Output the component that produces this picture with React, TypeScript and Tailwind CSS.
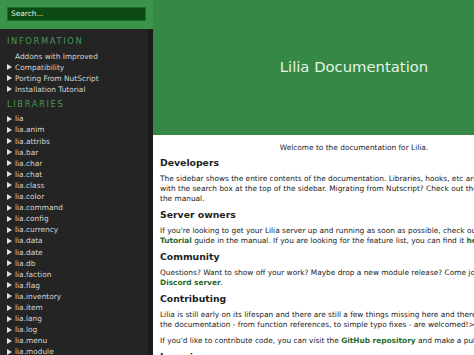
const infoItems = [
  { label: "Addons with Improved", arrow: false },
  { label: "Compatibility", arrow: true },
  { label: "Porting From NutScript", arrow: true },
  { label: "Installation Tutorial", arrow: true },
];

const libraries = [
  "lia", "lia.anim", "lia.attribs", "lia.bar", "lia.char", "lia.chat", "lia.class",
  "lia.color", "lia.command", "lia.config", "lia.currency", "lia.data", "lia.date",
  "lia.db", "lia.faction", "lia.flag", "lia.inventory", "lia.item", "lia.lang",
  "lia.log", "lia.menu", "lia.module", "lia.notice",
];

function Arrow() {
  return (
    <svg width="5" height="6" viewBox="0 0 5 6" className="shrink-0">
      <polygon points="0,0 5,3 0,6" fill="#e0e0e0" />
    </svg>
  );
}

function NavItem({ label, arrow }: { label: string; arrow: boolean }) {
  return (
    <li className="flex items-center h-[11.1px] pl-[7px]">
      <span className="w-[8px] flex items-center">{arrow && <Arrow />}</span>
      <span className="text-[#d6d6d6] whitespace-nowrap">{label}</span>
    </li>
  );
}

function Heading({ children }: { children: React.ReactNode }) {
  return <h2 className="mt-[4px] mb-[5px] text-[9.3px] leading-[12px] font-bold text-[#1e1e1e]">{children}</h2>;
}

function A({ children }: { children: React.ReactNode }) {
  return <a className="font-bold text-[#1f6a2c]">{children}</a>;
}

export default function App() {
  return (
    <div className="flex h-[355px] w-full overflow-hidden bg-white font-['DejaVu_Sans',sans-serif]">
      {/* Sidebar */}
      <aside className="w-[153px] shrink-0 flex flex-col">
        <div className="h-[29px] bg-[#3a9449] px-[7px] pt-[7px]">
          <div className="h-[14px] w-[139px] bg-[#0c4b14] border border-[#1d6e2a] flex items-center px-[3px] text-[7.4px] text-[#e4efe4]">
            Search...
          </div>
        </div>
        <div className="flex-1 flex bg-[#242424] min-h-0">
          <nav className="flex-1 pt-[5px] text-[7.4px] overflow-hidden">
            <div className="h-[14px] leading-[14px] pl-[7px] text-[8.4px] tracking-[1.6px] text-[#4c9558]">INFORMATION</div>
            <ul className="mt-[2.5px]">
              {infoItems.map((i) => (
                <NavItem key={i.label} label={i.label} arrow={i.arrow} />
              ))}
            </ul>
            <div className="mt-[2px] h-[14px] leading-[14px] pl-[7px] text-[8.4px] tracking-[1.6px] text-[#4c9558]">LIBRARIES</div>
            <ul className="mt-[2.5px]">
              {libraries.map((l) => (
                <NavItem key={l} label={l} arrow />
              ))}
            </ul>
          </nav>
          <div className="w-[5px] bg-[#1b1b1b]" />
        </div>
      </aside>

      {/* Main */}
      <main className="w-[402px] shrink-0 flex flex-col">
        <header className="h-[135px] shrink-0 bg-[#358845] flex items-center justify-center">
          <h1 className="text-[14.8px] text-[#e6f4e7]">Lilia Documentation</h1>
        </header>
        <div className="px-[7px] pt-[8px] text-[7.4px] leading-[10px] text-[#222] whitespace-nowrap">
          <p className="text-center">Welcome to the documentation for Lilia.</p>

          <Heading>Developers</Heading>
          <p className="mb-[5px]">
            The sidebar shows the entire contents of the documentation. Libraries, hooks, etc are all searchable
            <br />
            with the search box at the top of the sidebar. Migrating from Nutscript? Check out the <A>Porting</A> guide in
            <br />
            the manual.
          </p>

          <Heading>Server owners</Heading>
          <p className="mb-[5px]">
            If you're looking to get your Lilia server up and running as soon as possible, check out the <A>Installation</A>
            <br />
            <A>Tutorial</A> guide in the manual. If you are looking for the feature list, you can find it <A>here</A>.
          </p>

          <Heading>Community</Heading>
          <p className="mb-[5px]">
            Questions? Want to show off your work? Maybe drop a new module release? Come join our
            <br />
            <A>Discord server</A>.
          </p>

          <Heading>Contributing</Heading>
          <p className="mb-[5.7px]">
            Lilia is still early on its lifespan and there are still a few things missing here and there. Contributions to
            <br />
            the documentation - from function references, to simple typo fixes - are welcomed!&gt;
          </p>
          <p className="mb-[5px]">
            If you'd like to contribute code, you can visit the <A>GitHub repository</A> and make a pull request.
          </p>

          <Heading>Learning</Heading>
        </div>
      </main>
    </div>
  );
}
